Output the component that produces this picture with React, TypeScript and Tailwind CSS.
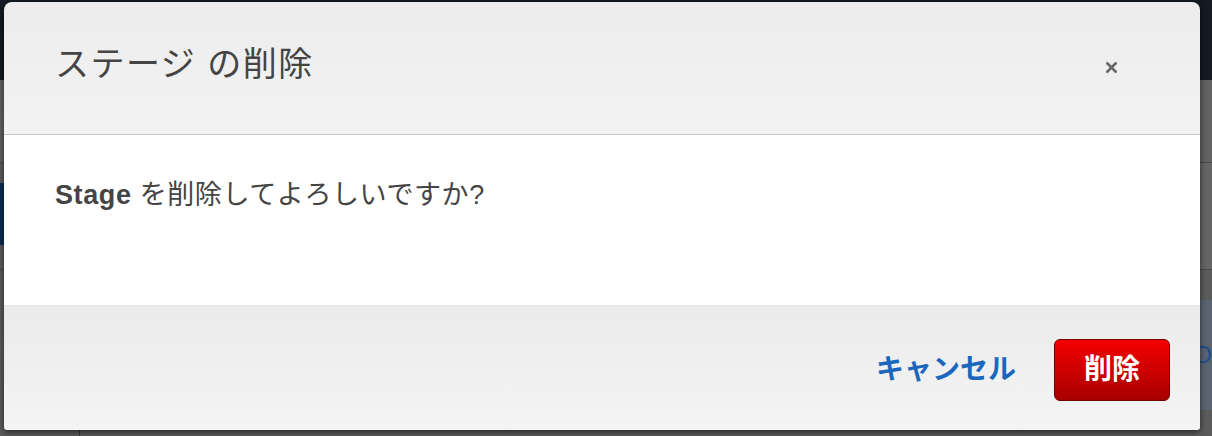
import { X } from "lucide-react";

const jp = "font-['Helvetica_Neue','Liberation_Sans','Noto_Sans_CJK_JP',sans-serif]";

export default function App() {
  return (
    <div className={`relative w-[1212px] h-[436px] overflow-hidden bg-[#5b5b5b] ${jp}`}>
      {/* dimmed page behind the modal */}
      <div className="h-[80px] bg-[#141a22]" />
      <div className="h-[83px] bg-[#626262] border-b border-[#4a4a4a]" />
      <div className="flex h-[107px] border-b border-[#4a4a4a]">
        <div className="w-[80px] flex flex-col">
          <div className="h-[20px]" />
          <div className="h-[62px] bg-[#0c2c52]" />
        </div>
        <div className="flex-1 bg-[#656565]" />
      </div>
      <div className="flex h-[166px]">
        <div className="w-[80px] border-r border-[#3a3a3a]" />
        <div className="flex-1 flex flex-col">
          <div className="h-[30px]" />
          <div className="h-[110px] bg-[#5a6470] flex justify-end items-center text-[#1a4f8c] text-[24px]">O</div>
        </div>
      </div>

      {/* modal */}
      <div className="absolute left-[4px] top-[2px] w-[1196px] h-[428px] rounded-t-[8px] rounded-b-[3px] overflow-hidden flex flex-col shadow-[0_2px_6px_rgba(0,0,0,0.6)]">
        <div className="h-[133px] shrink-0 bg-gradient-to-b from-[#ececec] to-[#f3f3f3] border-b border-[#cacaca] flex items-center justify-between pl-[51px] pr-[80px]">
          <h1 className="text-[#444] text-[34px] leading-none tracking-[1.5px] pb-[8px]">ステージ の削除</h1>
          <X size={17} strokeWidth={3.5} className="text-[#666] mb-[2px]" />
        </div>
        <div className="h-[171px] shrink-0 bg-white border-b border-[#e4e4e4] pl-[51px] pt-[47px]">
          <p className="text-[#444] text-[27px] leading-none tracking-[0.6px]">
            <span className="font-bold">Stage</span> を削除してよろしいですか?
          </p>
        </div>
        <div className="flex-1 bg-gradient-to-b from-[#ebebeb] to-[#f4f4f4] flex items-center justify-end gap-[38px] pr-[30px] pt-[3px]">
          <button className="text-[#1b67bd] text-[28px] font-bold leading-none">キャンセル</button>
          <button className="w-[116px] h-[62px] rounded-[6px] border border-[#6e0000] bg-gradient-to-b from-[#f50000] to-[#a80000] text-white text-[28px] font-bold leading-none">
            削除
          </button>
        </div>
      </div>
    </div>
  );
}
